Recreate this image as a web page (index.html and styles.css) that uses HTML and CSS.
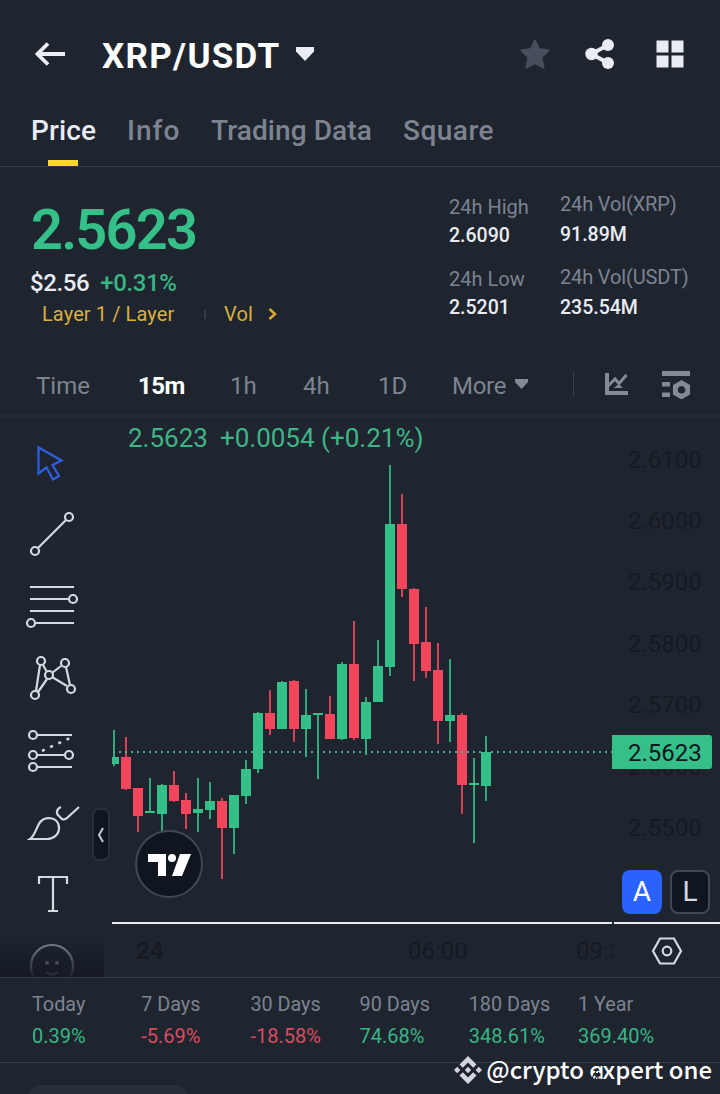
FILE: index.html
```
<!DOCTYPE html>
<html lang="en">
<head>
    <meta charset="UTF-8">
    <meta name="viewport" content="width=device-width, initial-scale=1.0">
    <title>XRP/USDT</title>
    <link rel="stylesheet" href="styles.css">
</head>
<body>
    <!-- Header -->
    <header class="header">
        <svg class="back" width="32" height="26" viewBox="0 0 32 26"><path d="M14 2.5 3.5 13 14 23.5M4 13h27" fill="none" stroke="#eaecf4" stroke-width="3.8"/></svg>
        <h1>XRP/USDT</h1>
        <svg class="caret" width="18" height="14" viewBox="0 0 18 14"><path d="M0 0h18v4.500L9 14 0 4.500z" fill="#eaecf4"/></svg>
        <svg class="star" width="32" height="32" viewBox="0 0 32 32"><path d="M16 2.500 20 11l9.500 1.500-7 6.800L24.500 29.500 16 25l-8.500 4.500 2-10.200-7-6.800L12 11z" fill="#474f5c" stroke="#474f5c" stroke-width="2" stroke-linejoin="round"/></svg>
        <svg class="share" width="30" height="32" viewBox="0 0 30 32"><path d="M23 7 6.500 16 23 25" fill="none" stroke="#eaecf4" stroke-width="4"/><circle cx="23" cy="7" r="6" fill="#eaecf4"/><circle cx="6.500" cy="16" r="6.200" fill="#eaecf4"/><circle cx="23" cy="25" r="6" fill="#eaecf4"/></svg>
        <svg width="28" height="28" viewBox="0 0 28 28"><path d="M0.500 0.500h12v12h-12zM15.500 0.500h12v12h-12zM0.500 15.500h12v12h-12zM15.500 15.500h12v12h-12z" fill="#eaecf4"/></svg>
    </header>

    <!-- Tabs -->
    <nav class="tabs">
        <a class="active">Price</a>
        <a class="info">Info</a>
        <a class="trading">Trading Data</a>
        <a class="square">Square</a>
    </nav>

    <!-- Price summary -->
    <section class="summary">
        <div class="quote">
            <div class="last">2.5623</div>
            <div class="change"><span>$2.56</span><span class="up">+0.31%</span></div>
            <div class="tags">
                <span class="layer">Layer 1 / Layer</span>
                <i></i>
                <span>Vol</span>
                <svg width="9" height="12" viewBox="0 0 9 12"><path d="M1.500 1 7 6l-5.500 5" fill="none" stroke="#d9a92f" stroke-width="2.500"/></svg>
            </div>
        </div>
        <dl class="stats">
            <dt>24h High</dt><dd>2.6090</dd>
            <dt>24h Low</dt><dd>2.5201</dd>
        </dl>
        <dl class="stats volume">
            <dt>24h Vol(XRP)</dt><dd>91.89M</dd>
            <dt>24h Vol(USDT)</dt><dd>235.54M</dd>
        </dl>
    </section>

    <!-- Intervals -->
    <nav class="intervals">
        <a class="time">Time</a>
        <a class="m15 active">15m</a>
        <a class="h1">1h</a>
        <a class="h4">4h</a>
        <a class="d1">1D</a>
        <a class="more">More</a>
        <svg class="drop" width="13" height="10" viewBox="0 0 13 10"><path d="M0 0h13v3L6.500 10 0 3z" fill="#848a96"/></svg>
        <i></i>
        <svg class="indicator" width="23" height="24" viewBox="0 0 23 24"><path d="M2 1v20h21" fill="none" stroke="#848a96" stroke-width="4"/><path d="M3 14l7-7 4 4.500L21.500 3" fill="none" stroke="#848a96" stroke-width="3"/><path d="M9 16l4.500-4 4.500 4z" fill="#848a96"/></svg>
        <svg width="29" height="29" viewBox="0 0 29 29"><path d="M0 1h28v5H0zM0 12h8v4.500H0zM0 22.500h8v4.500H0z" fill="#848a96"/><path fill-rule="evenodd" d="M19.500 10 28 15v9.500l-8.500 5-8.500-5V15zM19.500 16a3.800 3.800 0 1 0 .1 0z" fill="#848a96"/></svg>
    </nav>

    <!-- Chart -->
    <main class="chart">
        <aside class="tools">
            <svg width="104" height="560" viewBox="0 417 104 560" fill="none" stroke="#d5d9e2" stroke-width="2.200">
                <path d="M38.500 447.500v26l8-6 6.500 12 6-3.500-6.500-11 9-4.500z" stroke="#2f5fe0"/>
                <path d="M38 548l28-28"/><circle cx="69" cy="517" r="4"/><circle cx="35" cy="551" r="4"/>
                <path d="M30 587h44M30 599h38M30 611h44M35 623h39"/><circle cx="73" cy="599" r="4"/><circle cx="31" cy="623" r="4"/>
                <path d="M40 665l-4 26M38 692l9-13M43 665l4 7M52 673l9-7M66 667l4 18M52 677l15 9"/>
                <circle cx="41" cy="661" r="4"/><circle cx="65" cy="663" r="4"/><circle cx="49" cy="675" r="4"/><circle cx="71" cy="689" r="4"/><circle cx="35" cy="695" r="4"/>
                <path d="M37 735h35M37 755h28M37 767h35"/><path d="M42 751l28-13" stroke-width="2.500" stroke-dasharray="3 6"/>
                <circle cx="33" cy="735" r="4"/><circle cx="33" cy="755" r="4"/><circle cx="69" cy="755" r="4"/><circle cx="33" cy="767" r="4"/>
                <path d="M30 839c8-6 6-20 18-21 7 0 11 4 11 10 0 7-6 11-12 11zM61 807c-5 2-5 7-2 9l3 3c2 1 4 0 5-1l12-11"/>
                <path d="M39 884v-7h28v7M53 877v34M48 911h10"/>
                <g class="smiley"><circle cx="52" cy="966" r="21"/><path d="M46 972q6 5 12 0"/><circle cx="47" cy="963" r="1"/><circle cx="57" cy="963" r="1"/></g>
            </svg>
            <div class="fade"></div>
            <div class="collapse"><svg width="8" height="16" viewBox="0 0 8 16"><path d="M6 1 2 8l4 7" fill="none" stroke="#c3c7d0" stroke-width="2"/></svg></div>
        </aside>

        <div class="plot">
            <svg id="candles" width="500" height="505" viewBox="112 417 500 505"></svg>
            <div class="legend"><span>2.5623</span><span>+0.0054 (+0.21%)</span></div>
            <div class="logo"><svg width="44" height="22" viewBox="0 0 44 22"><path d="M0 0h18v22h-8V8H0zM32 0h11l-9 22H24z" fill="#fff"/><circle cx="24" cy="4" r="4" fill="#fff"/></svg></div>
            <div class="dates"><span class="day">24</span><span class="six">06:00</span><span class="nine">09:30</span></div>
        </div>

        <div class="axis">
            <div class="prices">
                <span>2.6100</span><span>2.6000</span><span>2.5900</span><span>2.5800</span><span>2.5700</span><span>2.5600</span><span>2.5500</span>
            </div>
            <div class="current">2.5623</div>
            <div class="modes"><b class="auto">A</b><b class="log">L</b></div>
            <div class="settings"><svg width="32" height="28" viewBox="0 0 32 28" fill="none" stroke="#d5d9e2" stroke-width="2.200"><path d="M9 1.500h14L30 14l-7 12.500H9L2 14z"/><circle cx="16" cy="14" r="4.300"/></svg></div>
        </div>
    </main>

    <!-- Performance -->
    <section class="performance">
        <div><span>Today</span><b>0.39%</b></div>
        <div><span>7 Days</span><b class="down">-5.69%</b></div>
        <div><span>30 Days</span><b class="down">-18.58%</b></div>
        <div><span>90 Days</span><b>74.68%</b></div>
        <div><span>180 Days</span><b>348.61%</b></div>
        <div><span>1 Year</span><b>369.40%</b></div>
    </section>

    <footer class="footer">
        <div class="pill"></div>
        <div class="credit">
            <svg width="28" height="28" viewBox="0 0 28 28" fill="#d3d6df"><path d="M14 0l8.500 8.500-3.300 3.200L14 6.500l-5.200 5.200-3.300-3.200zM14 28l8.500-8.500-3.300-3.200-5.200 5.200-5.200-5.200-3.300 3.200zM3.200 10.800 6.400 14l-3.200 3.200L0 14zM14 10.800l3.200 3.200-3.200 3.200-3.200-3.200zM24.800 10.800 28 14l-3.200 3.200-3.200-3.200z"/></svg>
            <span>@crypto expert one</span>
            <svg class="mark" width="14" height="18" viewBox="0 0 14 18" fill="none"><path d="M11.500 2v13" stroke="#fff" stroke-width="2"/><path d="M2 14 8 4M5 15 9 8M8 15V9" stroke="#1f252f" stroke-width="1.200"/></svg>
        </div>
    </footer>

    <script src="script.js"></script>
</body>
</html>
```
FILE: styles.css
```
* { margin: 0; padding: 0; box-sizing: border-box; }
body {
    width: 720px;
    height: 1094px;
    overflow: hidden;
    background: #1f252f;
    color: #eaecf4;
    font-family: Roboto, "Liberation Sans", sans-serif;
}
svg { display: block; flex: none; }
span, a, b { white-space: nowrap; }

.header { display: flex; align-items: center; height: 108px; padding: 0 36px 0 34px; }
.header h1 { width: 178px; margin: 4px 16px 0 36px; font-size: 35px; font-weight: 700; letter-spacing: 1.3px; color: #fff; }
.header .star { margin-left: auto; }
.header .share { margin: 0 41px 0 34px; }

.tabs { display: flex; height: 59px; padding-left: 31px; border-bottom: 1px solid #333b46; font-size: 28px; font-weight: 500; line-height: 45px; color: #7d838f; letter-spacing: 0.1px; }
.tabs a { position: relative; }
.tabs .active { width: 96px; color: #eaecf4; }
.tabs .active::after { content: ""; position: absolute; left: 17px; bottom: 0; width: 30px; height: 6px; background: #fcd535; }
.tabs .info { width: 84px; letter-spacing: 1px; }
.tabs .trading { width: 192px; }
.tabs .square { letter-spacing: 0.5px; }

.summary { display: flex; height: 183px; padding-left: 31px; }
.quote { width: 418px; padding-top: 33px; }
.last { font-size: 56px; font-weight: 600; line-height: 60px; letter-spacing: -1.8px; color: #34c088; }
.change { display: flex; gap: 11px; margin-top: 7px; font-size: 24px; font-weight: 500; line-height: 32px; letter-spacing: -0.4px; }
.change span:first-child { margin-left: -1px; }
.up { color: #38b584; }
.tags { display: flex; align-items: center; height: 30px; padding-left: 11px; font-size: 20px; color: #d9b03c; letter-spacing: 0.1px; }
.tags .layer { width: 162px; }
.tags i { width: 2px; height: 9px; margin-right: 18px; background: #353c47; }
.tags svg { margin-left: 15px; }
.stats { width: 111px; padding-top: 26px; font-size: 20px; }
.stats dt { line-height: 28px; color: #7d838f; white-space: nowrap; }
.stats dd { margin-bottom: 16px; padding-top: 1px; font-size: 19.5px; font-weight: 500; line-height: 27px; }
.volume { padding-top: 23px; }
.volume dt { letter-spacing: -0.15px; }
.volume dd { margin-bottom: 15px; padding-top: 3px; line-height: 27px; }

.intervals { display: flex; align-items: center; height: 67px; padding: 4px 0 0 36px; border-bottom: 3px solid #252b36; font-size: 24px; color: #7d838f; }
.intervals a { padding-top: 3px; }
.intervals .time { width: 102px; }
.intervals .m15 { width: 92px; letter-spacing: -0.5px; }
.intervals .h1 { width: 73px; }
.intervals .h4 { width: 75px; }
.intervals .d1 { width: 74px; }
.intervals .more { width: 63px; letter-spacing: -0.3px; }
.intervals i { width: 1px; height: 24px; margin: 0 31px 0 45px; background: #3a414d; }
.intervals .active { font-weight: 700; color: #fff; }
.intervals .indicator { margin-right: 34px; }

.chart { display: flex; height: 560px; }
.tools { position: relative; width: 112px; height: 560px; }
.smiley { opacity: 0.6; }
.fade { position: absolute; left: 0; bottom: 0; width: 104px; height: 42px; background: linear-gradient(rgba(19, 24, 34, 0), rgba(19, 24, 34, 0.9)); }
.collapse { position: absolute; left: 92px; top: 391px; display: flex; align-items: center; justify-content: center; width: 18px; height: 53px; border: 2px solid #2a303b; border-radius: 7px; background: #101620; }
.plot { position: relative; width: 500px; }
.legend { position: absolute; left: 16px; top: 6px; display: flex; gap: 12px; font-size: 26px; line-height: 30px; color: #3fb487; }
.logo { position: absolute; left: 23px; top: 413px; display: flex; align-items: center; justify-content: center; width: 68px; height: 68px; padding: 2px 0 0 1px; border: 2px solid #434752; border-radius: 50%; background: #101620; }
.dates { display: flex; height: 55px; overflow: hidden; border-top: 2px solid #e9ebf0; font-size: 24px; line-height: 54px; color: #151a23; }
.dates .day { width: 272px; padding-left: 24px; font-weight: 700; }
.dates .six { width: 192px; padding-left: 24px; }
.dates .nine { width: 36px; overflow: hidden; }

.axis { position: relative; width: 108px; }
.prices { display: flex; flex-direction: column; height: 505px; padding: 12.5px 0 0 16px; font-size: 24px; line-height: 61.4px; color: #151a23; }
.current { position: absolute; left: 0; top: 318px; width: 100px; height: 34px; padding-left: 16px; border-radius: 0 3px 3px 0; background: #34c088; color: #0f151d; font-size: 24px; line-height: 36px; }
.modes { position: absolute; left: 10px; top: 453px; display: flex; gap: 8px; }
.modes b { width: 40px; height: 44px; border-radius: 8px; font-size: 28px; font-weight: 400; line-height: 44px; text-align: center; }
.auto { background: #2962ff; color: #fff; }
.modes .log { border: 2px solid #434752; background: #101620; line-height: 40px; color: #d5d9e2; }
.settings { height: 55px; margin-left: 2px; padding: 13px 0 0 37px; border-top: 2px solid #e9ebf0; }

.performance { display: grid; grid-template-columns: repeat(6, 109.2px); height: 86px; padding: 13px 0 0 32px; border-top: 1px solid #333b46; border-bottom: 1px solid #333b46; }
.performance span, .performance b { display: block; font-size: 20px; font-weight: 400; line-height: 28px; }
.performance span { font-size: 19.8px; color: #7d838f; }
.performance b { margin-top: 3px; color: #38b584; }
.performance .down { color: #d94b62; }

.footer { position: relative; height: 31px; padding: 22px 0 0 29px; }
.pill { width: 158px; height: 30px; border-radius: 12px; background: #292f3a; }
.credit { position: absolute; right: 8px; top: -12px; display: flex; align-items: center; gap: 4px; font-family: "Noto Sans CJK SC", sans-serif; font-size: 24px; font-weight: 500; line-height: 38px; color: #fff; }
.credit span { margin-top: -1px; }
.mark { position: absolute; left: 136px; top: 13px; }
```
FILE: script.js
```
// [x, direction, body top, body bottom, high, low]
const candles = [
    [114, 'up', 757, 764, 730, 766],
    [126, 'down', 757, 789, 737, 790],
    [138, 'down', 788, 816, 788, 832],
    [150, 'up', 811, 813, 778, 813],
    [162, 'up', 785, 814, 784, 831],
    [174, 'down', 785, 801, 771, 802],
    [186, 'down', 800, 814, 793, 829],
    [198, 'up', 809, 813, 778, 832],
    [210, 'up', 801, 810, 782, 819],
    [222, 'down', 801, 828, 798, 879],
    [234, 'up', 795, 828, 795, 854],
    [246, 'up', 769, 796, 760, 804],
    [258, 'up', 713, 769, 712, 773],
    [270, 'down', 713, 729, 690, 735],
    [282, 'up', 682, 729, 681, 729],
    [294, 'down', 681, 729, 680, 742],
    [306, 'up', 715, 729, 689, 757],
    [318, 'up', 713, 715, 713, 779],
    [330, 'down', 714, 739, 696, 739],
    [342, 'up', 664, 739, 662, 740],
    [354, 'down', 664, 738, 621, 740],
    [366, 'up', 702, 739, 697, 755],
    [378, 'up', 666, 702, 640, 702],
    [390, 'up', 524, 667, 465, 676],
    [402, 'down', 524, 589, 494, 597],
    [414, 'down', 589, 644, 588, 681],
    [426, 'down', 642, 671, 607, 678],
    [438, 'down', 670, 721, 643, 744],
    [450, 'up', 715, 721, 659, 742],
    [462, 'down', 715, 785, 713, 814],
    [474, 'up', 783, 785, 758, 843],
    [486, 'up', 752, 786, 736, 801]
];
const colors = { up: '#34c088', down: '#f6465d' };

let svg = '';
candles.forEach(([x, dir, top, bottom, high, low]) => {
    svg += `<rect x="${x - 1}" y="${high}" width="2" height="${low - high}" fill="${colors[dir]}" opacity="0.85"/>`;
    svg += `<rect x="${x - 5}" y="${top}" width="10" height="${bottom - top}" fill="${colors[dir]}"/>`;
});
// Current price line
svg += '<path d="M113 752h499" stroke="#4cae8a" stroke-width="2" stroke-dasharray="2 4"/>';
document.getElementById('candles').innerHTML = svg;
```
